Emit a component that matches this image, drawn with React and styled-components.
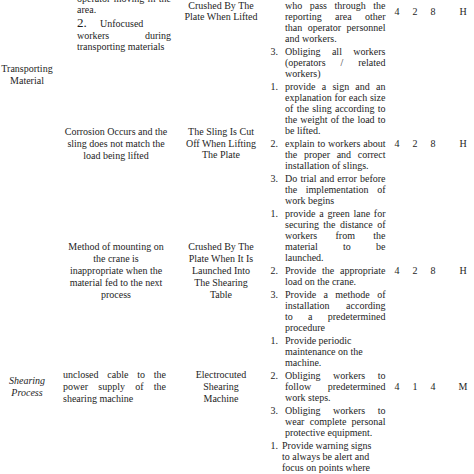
import React from "react";
import styled, { createGlobalStyle } from "styled-components";

const GlobalStyle = createGlobalStyle`
  html, body {
    margin: 0;
    padding: 0;
    background: #fff;
    overflow: hidden;
  }
  body {
    font-family: "Liberation Serif", "Times New Roman", serif;
    color: #1e1e1e;
  }
`;

// the table continues from the previous page, so the view starts part way into row 1
const Page = styled.div`
  width: 474px;
  height: 474px;
  overflow: hidden;
`;

const Sheet = styled.table`
  border-collapse: collapse;
  table-layout: fixed;
  width: 484px;
  margin-top: -58px;
  font-size: 10px;
`;

const Col = styled.col`
  width: ${(p) => p.$w}px;
`;

const ProcessCell = styled.td`
  padding: 0;
  text-align: center;
  vertical-align: middle;
  line-height: 11.5px;
  font-style: ${(p) => (p.$italic ? "italic" : "normal")};
`;

const CauseCell = styled.td`
  padding: 0 ${(p) => p.$pr}px 0 ${(p) => p.$pl}px;
  vertical-align: middle;
  text-align: ${(p) => p.$align};
  line-height: ${(p) => (p.$list ? "11.5px" : "12px")};
`;

const EffectCell = styled.td`
  padding: 0;
  text-align: center;
  vertical-align: middle;
  line-height: ${(p) => p.$lh || 12}px;
`;

const ControlCell = styled.td`
  padding: 1px 2.5px 1px 0;
  vertical-align: middle;
  text-align: left;
`;

const ScoreCell = styled.td`
  padding: 0;
  text-align: center;
  vertical-align: middle;
`;

const Line = styled.div`
  white-space: ${(p) => (p.$justify ? "normal" : "nowrap")};
  text-align: ${(p) => (p.$justify ? "justify" : "inherit")};
  text-align-last: ${(p) => (p.$justify ? "justify" : "auto")};
`;

const Block = styled.div``;

const BigNum = styled.span`
  display: inline-block;
  width: 23px;
  font-size: 13px;
  line-height: 14px;
`;

const Item = styled.div`
  display: flex;
  line-height: 11px;
  & + & {
    margin-top: 2px;
  }
`;

const ItemNum = styled.span`
  flex: none;
  width: 12px;
  text-align: right;
  margin-right: ${(p) => p.$gap}px;
`;

const ItemText = styled.div`
  flex: 1;
`;

const rows = [
  {
    process: { lines: ["Transporting", "Material"], span: 2 },
    cause: {
      align: "left",
      pl: 23,
      pr: 5,
      list: true,
      blocks: [
        {
          lines: ["Lack of attention from", "workers to the crane", "operator moving in the", "area."],
          justify: true,
        },
        { num: "2.", lines: ["Unfocused", "workers during", "transporting materials"], justify: true },
      ],
    },
    effect: ["Crushed By The", "Plate When Lifted"],
    effectLh: 11.5,
    controls: [
      { n: "1.", lines: ["Provide a safety line", "around the lifting area."], justify: true },
      {
        n: "2.",
        lines: [
          "Forbidding workers or",
          "other personnel to be",
          "in the lifting area or",
          "who pass through the",
          "reporting area other",
          "than operator personnel",
          "and workers.",
        ],
        justify: true,
      },
      { n: "3.", lines: ["Obliging all workers", "(operators / related", "workers)"], justify: true },
    ],
    scores: ["4", "2", "8", "H"],
  },
  {
    cause: {
      align: "center",
      pl: 10,
      pr: 8,
      blocks: [{ lines: ["Corrosion Occurs and the", "sling does not match the", "load being lifted"] }],
    },
    effect: ["The Sling Is Cut", "Off When Lifting", "The Plate"],
    effectLh: 11.5,
    controls: [
      {
        n: "1.",
        lines: [
          "provide a sign and an",
          "explanation for each size",
          "of the sling according to",
          "the weight of the load to",
          "be lifted.",
        ],
        justify: true,
      },
      { n: "2.", lines: ["explain to workers about", "the proper and correct", "installation of slings."], justify: true },
      { n: "3.", lines: ["Do trial and error before", "the implementation of", "work begins"], justify: true },
    ],
    scores: ["4", "2", "8", "H"],
  },
  {
    process: { lines: [] },
    cause: {
      align: "center",
      pl: 10,
      pr: 8,
      blocks: [
        {
          lines: [
            "Method of mounting on",
            "the crane is",
            "inappropriate when the",
            "material fed to the next",
            "process",
          ],
        },
      ],
    },
    effect: ["Crushed By The", "Plate When It Is", "Launched Into", "The Shearing", "Table"],
    controls: [
      {
        n: "1.",
        lines: [
          "provide a green lane for",
          "securing the distance of",
          "workers from the",
          "material to be",
          "launched.",
        ],
        justify: true,
      },
      { n: "2.", lines: ["Provide the appropriate", "load on the crane."], justify: true },
      {
        n: "3.",
        lines: ["Provide a methode of", "installation according", "to a predetermined", "procedure"],
        justify: true,
      },
    ],
    scores: ["4", "2", "8", "H"],
  },
  {
    process: { lines: ["Shearing", "Process"], italic: true },
    cause: {
      align: "left",
      pl: 9,
      pr: 10,
      blocks: [
        { lines: ["unclosed cable to the", "power supply of the", "shearing machine"], justify: true },
      ],
    },
    effect: ["Electrocuted", "Shearing", "Machine"],
    controls: [
      { n: "1.", lines: ["Provide periodic", "maintenance on the", "machine."] },
      { n: "2.", lines: ["Obliging workers to", "follow predetermined", "work steps."], justify: true },
      {
        n: "3.",
        lines: ["Obliging workers to", "wear complete personal", "protective equipment."],
        justify: true,
      },
    ],
    scores: ["4", "1", "4", "M"],
  },
  {
    process: { lines: [] },
    cause: {
      align: "center",
      pl: 10,
      pr: 8,
      blocks: [{ lines: ["Hands of workers are", "close to the blade of", "the shearing machine"] }],
    },
    effect: ["Hands Pinched", "By The Shearing", "Blade"],
    controls: [
      {
        n: "1.",
        gap: 4,
        lines: [
          "Provide warning signs",
          "to always be alert and",
          "focus on points where",
          "the hands are close to",
          "the blade.",
        ],
      },
      { n: "2.", lines: ["Obliging workers to", "use gloves while", "operating the machine."], justify: true },
      { n: "3.", lines: ["Provide a guard on", "the blade of the", "shearing machine."], justify: true },
    ],
    scores: ["4", "2", "8", "H"],
  },
];

function Lines({ lines, justify }) {
  return lines.map((text, i) => (
    <Line key={i} $justify={justify && i < lines.length - 1}>
      {text}
    </Line>
  ));
}

function Cause({ cause }) {
  return (
    <CauseCell $align={cause.align} $pl={cause.pl} $pr={cause.pr} $list={cause.list}>
      {cause.blocks.map((b, i) => (
        <Block key={i}>
          {b.lines.map((text, j) => (
            <Line key={j} $justify={b.justify && !(j === 0 && b.num) && j < b.lines.length - 1}>
              {j === 0 && b.num && <BigNum>{b.num}</BigNum>}
              {text}
            </Line>
          ))}
        </Block>
      ))}
    </CauseCell>
  );
}

export default function App() {
  return (
    <Page>
      <GlobalStyle />
      <Sheet>
        <colgroup>
          <Col $w={54} />
          <Col $w={122} />
          <Col $w={90} />
          <Col $w={122} />
          <Col $w={18} />
          <Col $w={18} />
          <Col $w={18} />
          <Col $w={42} />
        </colgroup>
        <tbody>
          {rows.map((row, r) => (
            <tr key={r}>
              {row.process && (
                <ProcessCell rowSpan={row.process.span || 1} $italic={row.process.italic}>
                  <Lines lines={row.process.lines} />
                </ProcessCell>
              )}
              <Cause cause={row.cause} />
              <EffectCell $lh={row.effectLh}>
                <Lines lines={row.effect} />
              </EffectCell>
              <ControlCell>
                {row.controls.map((c, i) => (
                  <Item key={i}>
                    <ItemNum $gap={c.gap ?? 7}>{c.n}</ItemNum>
                    <ItemText>
                      <Lines lines={c.lines} justify={c.justify} />
                    </ItemText>
                  </Item>
                ))}
              </ControlCell>
              {row.scores.map((s, i) => (
                <ScoreCell key={i}>{s}</ScoreCell>
              ))}
            </tr>
          ))}
        </tbody>
      </Sheet>
    </Page>
  );
}
